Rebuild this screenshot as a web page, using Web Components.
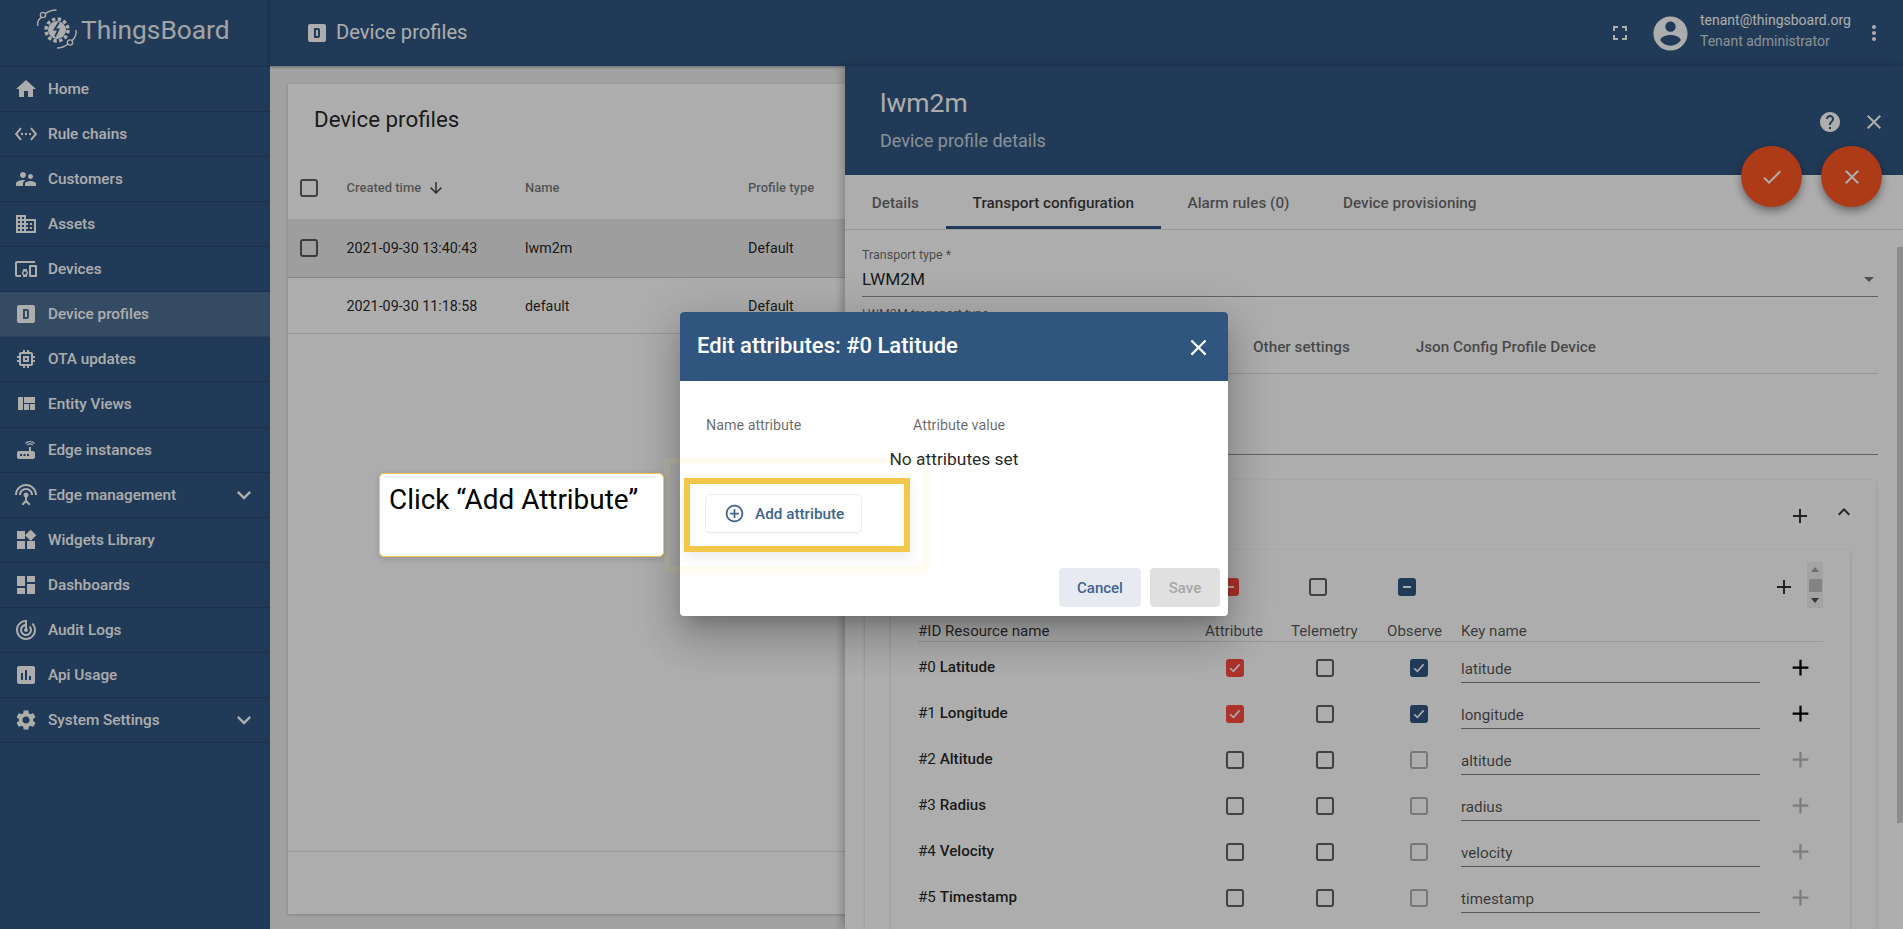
<!DOCTYPE html>
<html lang="en"><head><meta charset="utf-8"><title>Device profiles</title>
<style>
html,body{margin:0;height:100%;overflow:hidden;background:#eee;font-family:Roboto,"Liberation Sans",sans-serif}
</style></head><body>
<tb-app></tb-app>
<script>
const P={
home:'M10 20v-6h4v6h5v-8h3L12 3 2 12h3v8z',
rule:'M7.77 6.76L6.23 5.48.82 12l5.41 6.52 1.54-1.28L3.42 12l4.35-5.24zM7 13h2v-2H7v2zm10-2h-2v2h2v-2zm-6 2h2v-2h-2v2zm6.77-7.52l-1.54 1.28L20.58 12l-4.35 5.24 1.54 1.28L23.18 12l-5.41-6.52z',
people:'M16.5 12c1.38 0 2.49-1.12 2.49-2.5S17.88 7 16.5 7C15.12 7 14 8.12 14 9.5s1.12 2.5 2.5 2.5zM9 11c1.66 0 2.99-1.34 2.99-3S10.66 5 9 5C7.34 5 6 6.34 6 8s1.34 3 3 3zm7.5 3c-1.83 0-5.5.92-5.5 2.75V19h11v-2.25c0-1.83-3.67-2.75-5.5-2.75zM9 13c-2.33 0-7 1.17-7 3.5V19h7v-2.25c0-.85.33-2.34 2.37-3.47C10.5 13.1 9.66 13 9 13z',
domain:'M12 7V3H2v18h20V7H12zM6 19H4v-2h2v2zm0-4H4v-2h2v2zm0-4H4V9h2v2zm0-4H4V5h2v2zm4 12H8v-2h2v2zm0-4H8v-2h2v2zm0-4H8V9h2v2zm0-4H8V5h2v2zm10 12h-8v-2h2v-2h-2v-2h2v-2h-2V9h8v10zm-2-8h-2v2h2v-2zm0 4h-2v2h2v-2z',
devices:'M3 6h18V4H3c-1.1 0-2 .9-2 2v12c0 1.1.9 2 2 2h4v-2H3V6zm10 6H9v1.78c-.61.55-1 1.33-1 2.22s.39 1.67 1 2.22V20h4v-1.78c.61-.55 1-1.34 1-2.22s-.39-1.67-1-2.22V12zm-2 5.5c-.83 0-1.5-.67-1.5-1.5s.67-1.5 1.5-1.5 1.5.67 1.5 1.5-.67 1.5-1.5 1.5zM22 8h-6c-.5 0-1 .5-1 1v10c0 .5.5 1 1 1h6c.5 0 1-.5 1-1V9c0-.5-.5-1-1-1zm-1 10h-4v-8h4v8z',
dbox:'M9,7V17H13A2,2 0 0,0 15,15V9A2,2 0 0,0 13,7H9M5,3H19A2,2 0 0,1 21,5V19A2,2 0 0,1 19,21H5A2,2 0 0,1 3,19V5A2,2 0 0,1 5,3M11,9H13V15H11V9Z',
memory:'M15 9H9v6h6V9zm-2 4h-2v-2h2v2zm8-2V9h-2V7c0-1.1-.9-2-2-2h-2V3h-2v2h-2V3H9v2H7c-1.1 0-2 .9-2 2v2H3v2h2v2H3v2h2v2c0 1.1.9 2 2 2h2v2h2v-2h2v2h2v-2h2c1.1 0 2-.9 2-2v-2h2v-2h-2v-2h2zm-4 6H7V7h10v10z',
quilt:'M10 18h5v-6h-5v6zm-6 0h5V5H4v13zm12 0h5v-6h-5v6zM10 5v6h11V5H10z',
router:'M20.2 5.9l.8-.8C19.6 3.7 17.8 3 16 3s-3.6.7-5 2.1l.8.8C13 4.8 14.5 4.2 16 4.2s3 .6 4.2 1.7zm-.9.8c-.9-.9-2.1-1.4-3.3-1.4s-2.4.5-3.3 1.4l.8.8c.7-.7 1.6-1 2.5-1 .9 0 1.8.3 2.5 1l.8-.8zM19 13h-2V9h-2v4H5c-1.1 0-2 .9-2 2v4c0 1.1.9 2 2 2h14c1.1 0 2-.9 2-2v-4c0-1.1-.9-2-2-2zM8 18H6v-2h2v2zm3.5 0h-2v-2h2v2zm3.5 0h-2v-2h2v2z',
antenna:'M12 5c-3.87 0-7 3.13-7 7h2c0-2.76 2.24-5 5-5s5 2.24 5 5h2c0-3.87-3.13-7-7-7zm1 9.29c.88-.39 1.5-1.26 1.5-2.29 0-1.38-1.12-2.5-2.5-2.5S9.5 10.62 9.5 12c0 1.02.62 1.9 1.5 2.29v3.3L7.59 21 9 22.41l3-3 3 3L16.41 21 13 17.59v-3.3zM12 1C5.93 1 1 5.93 1 12h2c0-4.97 4.03-9 9-9s9 4.03 9 9h2c0-6.07-4.93-11-11-11z',
widgets:'M13 13v8h8v-8h-8zM3 21h8v-8H3v8zM3 3v8h8V3H3zm13.66-1.31L11 7.34 16.66 13l5.66-5.66-5.66-5.65z',
dash:'M3 13h8V3H3v10zm0 8h8v-6H3v6zm10 0h8V11h-8v10zm0-18v6h8V3h-8z',
track:'M19.07 4.93l-1.41 1.41C19.1 7.79 20 9.79 20 12c0 4.42-3.58 8-8 8s-8-3.58-8-8c0-4.08 3.05-7.44 7-7.93v2.02C8.16 6.57 6 9.03 6 12c0 3.31 2.69 6 6 6s6-2.69 6-6c0-1.66-.67-3.16-1.76-4.24l-1.41 1.41C15.55 9.9 16 10.9 16 12c0 2.21-1.79 4-4 4s-4-1.79-4-4c0-1.86 1.28-3.41 3-3.86v2.14c-.6.35-1 .98-1 1.72 0 1.1.9 2 2 2s2-.9 2-2c0-.74-.4-1.38-1-1.72V2h-1C6.48 2 2 6.48 2 12s4.48 10 10 10 10-4.48 10-10c0-2.76-1.12-5.26-2.93-7.07z',
chart:'M19 3H5c-1.1 0-2 .9-2 2v14c0 1.1.9 2 2 2h14c1.1 0 2-.9 2-2V5c0-1.1-.9-2-2-2zM9 17H7v-7h2v7zm4 0h-2V7h2v10zm4 0h-2v-4h2v4z',
settings:'M19.14 12.94c.04-.3.06-.61.06-.94 0-.32-.02-.64-.07-.94l2.03-1.58c.18-.14.23-.41.12-.61l-1.92-3.32c-.12-.22-.37-.29-.59-.22l-2.39.96c-.5-.38-1.03-.7-1.62-.94l-.36-2.54c-.04-.24-.24-.41-.48-.41h-3.84c-.24 0-.43.17-.47.41l-.36 2.54c-.59.24-1.13.57-1.62.94l-2.39-.96c-.22-.08-.47 0-.59.22L2.74 8.87c-.12.21-.08.47.12.61l2.03 1.58c-.05.3-.07.63-.07.94s.02.64.07.94l-2.03 1.58c-.18.14-.23.41-.12.61l1.92 3.32c.12.22.37.29.59.22l2.39-.96c.5.38 1.03.7 1.62.94l.36 2.54c.05.24.24.41.48.41h3.84c.24 0 .44-.17.47-.41l.36-2.54c.59-.24 1.13-.56 1.62-.94l2.39.96c.22.08.47 0 .59-.22l1.92-3.32c.12-.22.07-.47-.12-.61l-2.01-1.58zM12 15.6c-1.98 0-3.6-1.62-3.6-3.6s1.62-3.6 3.6-3.6 3.6 1.62 3.6 3.6-1.62 3.6-3.6 3.6z',
more:'M16.59 8.59L12 13.17 7.41 8.59 6 10l6 6 6-6z',
less:'M12 8l-6 6 1.41 1.41L12 10.83l4.59 4.58L18 14z',
account:'M12 2C6.48 2 2 6.48 2 12s4.48 10 10 10 10-4.48 10-10S17.52 2 12 2zm0 3c1.66 0 3 1.34 3 3s-1.34 3-3 3-3-1.34-3-3 1.34-3 3-3zm0 14.2c-2.5 0-4.71-1.28-6-3.22.03-1.99 4-3.08 6-3.08 1.99 0 5.97 1.09 6 3.08-1.29 1.94-3.5 3.22-6 3.22z',
full:'M7 14H5v5h5v-2H7v-3zm-2-4h2V7h3V5H5v5zm12 7h-3v2h5v-5h-2v3zM14 5v2h3v3h2V5h-5z',
vert:'M12 8c1.1 0 2-.9 2-2s-.9-2-2-2-2 .9-2 2 .9 2 2 2zm0 2c-1.1 0-2 .9-2 2s.9 2 2 2 2-.9 2-2-.9-2-2-2zm0 6c-1.1 0-2 .9-2 2s.9 2 2 2 2-.9 2-2-.9-2-2-2z',
help:'M12 2C6.48 2 2 6.48 2 12s4.48 10 10 10 10-4.48 10-10S17.52 2 12 2zm1 17h-2v-2h2v2zm2.07-7.75l-.9.92C13.45 12.9 13 13.5 13 15h-2v-.5c0-1.1.45-2.1 1.17-2.83l1.24-1.26c.37-.36.59-.86.59-1.41 0-1.1-.9-2-2-2s-2 .9-2 2H8c0-2.21 1.79-4 4-4s4 1.79 4 4c0 .88-.36 1.68-.93 2.25z',
close:'M19 6.41L17.59 5 12 10.59 6.41 5 5 6.41 10.59 12 5 17.59 6.41 19 12 13.41 17.59 19 19 17.59 13.41 12z',
check:'M9 16.17L4.83 12l-1.42 1.41L9 19 21 7l-1.41-1.41z',
add:'M19 13h-6v6h-2v-6H5v-2h6V5h2v6h6v2z',
down:'M20 12l-1.41-1.41L13 16.17V4h-2v12.17l-5.58-5.59L4 12l8 8 8-8z',
addc:'M13 7h-2v4H7v2h4v4h2v-4h4v-2h-4V7zm-1-5C6.48 2 2 6.48 2 12s4.48 10 10 10 10-4.48 10-10S17.52 2 12 2zm0 18c-4.41 0-8-3.59-8-8s3.59-8 8-8 8 3.59 8 8-3.59 8-8 8z',
caret:'M7 10l5 5 5-5z'
};
function def(tag,css,html){
  class C extends HTMLElement{
    constructor(){super();const r=this.attachShadow({mode:'open'});
      r.innerHTML='<style>'+css+'</style>'+(typeof html==='function'?html(this):html);}
  }
  customElements.define(tag,C);
}
class TbIcon extends HTMLElement{
  connectedCallback(){
    if(this.shadowRoot)return;
    const s=this.getAttribute('size')||24;
    this.attachShadow({mode:'open'}).innerHTML=`<style>:host{display:inline-flex;flex:none;width:${s}px;height:${s}px;color:inherit}svg{width:100%;height:100%;fill:currentColor;display:block}</style><svg viewBox="0 0 24 24"><path d="${P[this.getAttribute('name')]}"/></svg>`;
  }
}
customElements.define('tb-icon',TbIcon);

class TbCheck extends HTMLElement{
  connectedCallback(){
    if(this.shadowRoot)return;
    const k=this.getAttribute('kind')||'off';
    const c={off:'rgba(0,0,0,.62)',faint:'rgba(0,0,0,.3)',red:'#ff4b40',blue:'#305680'}[k];
    const fill=k==='red'||k==='blue';
    const mark=this.getAttribute('mark');
    const m=mark==='minus'?'<path d="M5 9h8" stroke="#fff" stroke-width="2"/>':mark==='check'?'<path d="M4.2 9.2l3.2 3.2 6.2-7" fill="none" stroke="#fff" stroke-width="1.6"/>':'';
    this.attachShadow({mode:'open'}).innerHTML=`<style>:host{display:inline-flex;flex:none;width:18px;height:18px}svg{display:block}</style><svg width="18" height="18" viewBox="0 0 18 18"><rect x="1" y="1" width="16" height="16" rx="2" fill="${fill?c:'none'}" stroke="${c}" stroke-width="2"/>${m}</svg>`;
  }
}
customElements.define('tb-check',TbCheck);

def('tb-nav-item',`
:host{display:flex;align-items:center;height:44.07px;border-bottom:1px solid rgba(0,0,0,.12);color:#fff;font:500 15.3px/20px Roboto,sans-serif;position:relative}
:host([active]){background:rgba(255,255,255,.15)}
.ic{width:48px;display:flex;justify-content:center;padding-left:3px;box-sizing:border-box}
.t{flex:1;white-space:nowrap}
.x{margin-right:12px;display:flex}
`,el=>`<div class="ic"><tb-icon name="${el.getAttribute('icon')}"></tb-icon></div><div class="t"><slot></slot></div>${el.hasAttribute('expand')?'<div class="x"><tb-icon name="more" size="28"></tb-icon></div>':''}`);

def('tb-logo',`
:host{display:flex;align-items:center;height:67px;padding-left:36px;color:#fff;box-sizing:border-box;border-bottom:1px solid rgba(0,0,0,.14)}
svg{display:block;margin-right:3px;margin-top:-6px}
span{font:400 26.3px/32px Roboto,sans-serif;margin-top:-6px;opacity:.92}
`,`<svg width="42" height="44" viewBox="36 10 42 44"><g fill="none" stroke="currentColor" stroke-width="1.4"><circle cx="43" cy="17" r="2.6"/><path d="M38 28C37 24 39 21 41.4 19.4M45.5 15.5C48 13.6 52 12 56.5 12"/><circle cx="70" cy="44.5" r="2.6"/><path d="M76 32C76.5 36 75 40 72 42.5M67.8 46C65 48.5 61 50 57 50"/></g><circle cx="57" cy="32" r="9" fill="currentColor"/><circle cx="57" cy="32" r="11" fill="none" stroke="currentColor" stroke-width="3.4" stroke-dasharray="3.4 2.4"/><path d="M59 24.5l-4.5 7h4l-3.5 7" fill="none" stroke="#305680" stroke-width="1.8"/></svg><span>ThingsBoard</span>`);

def('tb-sidebar',`
:host{display:block;background:#305680;box-shadow:1px 0 0 rgba(0,0,0,.18);position:relative;overflow:hidden}
`,`<tb-logo></tb-logo>
<tb-nav-item icon="home">Home</tb-nav-item>
<tb-nav-item icon="rule">Rule chains</tb-nav-item>
<tb-nav-item icon="people">Customers</tb-nav-item>
<tb-nav-item icon="domain">Assets</tb-nav-item>
<tb-nav-item icon="devices">Devices</tb-nav-item>
<tb-nav-item icon="dbox" active>Device profiles</tb-nav-item>
<tb-nav-item icon="memory">OTA updates</tb-nav-item>
<tb-nav-item icon="quilt">Entity Views</tb-nav-item>
<tb-nav-item icon="router">Edge instances</tb-nav-item>
<tb-nav-item icon="antenna" expand>Edge management</tb-nav-item>
<tb-nav-item icon="widgets">Widgets Library</tb-nav-item>
<tb-nav-item icon="dash">Dashboards</tb-nav-item>
<tb-nav-item icon="track">Audit Logs</tb-nav-item>
<tb-nav-item icon="chart">Api Usage</tb-nav-item>
<tb-nav-item icon="settings" expand>System Settings</tb-nav-item>`);

def('tb-topbar',`
:host{display:flex;align-items:center;height:66px;background:#305680;color:#fff;padding:0 17px 0 35px;box-sizing:border-box;box-shadow:0 1px 3px rgba(0,0,0,.4);position:relative;flex:none}
.title{font:400 20.2px/28px Roboto,sans-serif;margin-left:7px;margin-top:-2px}
.r{margin-left:auto;display:flex;align-items:center}
.u{width:151px;margin:0 11px 0 9px}
.a{font:400 14px/20px Roboto,sans-serif;white-space:nowrap;margin-top:-6px}
.b{font:400 14px/20px Roboto,sans-serif;opacity:.75;white-space:nowrap;margin-top:1px}
`,`<tb-icon name="dbox"></tb-icon><div class="title">Device profiles</div>
<div class="r"><tb-icon name="full"></tb-icon><span style="width:18px"></span><tb-icon name="account" size="41"></tb-icon>
<div class="u"><div class="a">tenant@thingsboard.org</div><div class="b">Tenant administrator</div></div><tb-icon name="vert"></tb-icon></div>`);

def('tb-table-row',`
:host{display:grid;grid-template-columns:58.5px 178.5px 223px 1fr;align-items:center;height:55px;border-bottom:1px solid rgba(0,0,0,.12);color:rgba(0,0,0,.87);font:400 14.3px/20px Roboto,sans-serif}
:host([sel]){background:#e9e9e9;height:58px}
:host([head]){height:63px;color:rgba(0,0,0,.54);font:500 13px/16px Roboto,sans-serif;border-bottom:0}
.c{padding-left:12px;display:flex}
.m{display:flex;align-items:center;gap:6px}
`,el=>`<div class="c">${el.hasAttribute('box')?'<tb-check></tb-check>':''}</div><div class="m">${el.getAttribute('a')}${el.hasAttribute('head')?'<tb-icon name="down" size="18" style="color:rgba(0,0,0,.75)"></tb-icon>':''}</div><div>${el.getAttribute('b')}</div><div>${el.getAttribute('c')}</div>`);

def('tb-card',`
:host{display:flex;flex-direction:column;background:#fff;height:100%;box-shadow:0 1px 3px rgba(0,0,0,.2)}
h2{margin:0;font:400 22.3px/30px Roboto,sans-serif;color:rgba(0,0,0,.87);padding:20px 0 22px 26px}
.sp{flex:1}
.f{height:62px;border-top:1px solid rgba(0,0,0,.12);flex:none}
`,`<h2>Device profiles</h2>
<tb-table-row head box a="Created time" b="Name" c="Profile type"></tb-table-row>
<tb-table-row sel box a="2021-09-30 13:40:43" b="lwm2m" c="Default"></tb-table-row>
<tb-table-row a="2021-09-30 11:18:58" b="default" c="Default"></tb-table-row>
<div class="sp"></div><div class="f"></div>`);

def('tb-tab',`
:host{display:flex;align-items:center;justify-content:center;padding:1px 26.8px 0;height:54px;box-sizing:border-box;color:rgba(0,0,0,.6);font:500 15.3px/20px Roboto,sans-serif;white-space:nowrap}
:host([active]){border-bottom:3px solid #305680;padding-top:4px;color:rgba(0,0,0,.78)}
`,`<slot></slot>`);

def('tb-attr-row',`
:host{display:grid;grid-template-columns:278px 78px 102px 85px 299px 63px;align-items:center;height:46px;font:400 15.2px/20px Roboto,sans-serif;color:rgba(0,0,0,.87)}
.n{padding-bottom:3px;white-space:nowrap}.n b{font-weight:500}
.c{display:flex;justify-content:center}
.k{height:28px;box-sizing:border-box;display:flex;align-items:center;border-bottom:1px solid rgba(0,0,0,.5);color:rgba(0,0,0,.7);margin-top:2px}
.p{padding:0 0 2px 27px;display:flex}
`,el=>{const on=el.hasAttribute('on');return `<div class="n">${el.getAttribute('id-label')} <b>${el.getAttribute('label')}</b></div>
<div class="c"><tb-check kind="${on?'red':'off'}" ${on?'mark="check"':''}></tb-check></div>
<div class="c"><tb-check></tb-check></div>
<div class="c"><tb-check kind="${on?'blue':'faint'}" ${on?'mark="check"':''}></tb-check></div>
<div class="k">${el.getAttribute('key')}</div>
<div class="p"><tb-icon name="add" size="27" style="color:${on?'#000':'rgba(0,0,0,.28)'}"></tb-icon></div>`});

def('tb-drawer',`
:host{display:flex;flex-direction:column;background:#fff;box-shadow:-3px 0 8px rgba(0,0,0,.25);overflow:hidden}
.hd{height:109px;background:#305680;color:#fff;display:flex;justify-content:space-between;padding:0 17px 41px 35px;box-sizing:border-box;flex:none;position:relative;align-items:flex-end}
.tt{align-self:flex-start;padding-top:21px}
.t1{font:400 26.5px/32px Roboto,sans-serif}
.t2{font:400 18px/22px Roboto,sans-serif;margin-top:11px;opacity:.75}
.ac{display:flex;gap:20px}
.tabs{display:flex;height:54px;border-bottom:1px solid rgba(0,0,0,.12);flex:none;padding-left:0}
.body{flex:1;padding:18px 25px 0 17px;position:relative;overflow:hidden}
.lb{font:400 12.5px/14px Roboto,sans-serif;color:rgba(0,0,0,.6)}
.sel{display:flex;justify-content:space-between;align-items:center;font:400 17.2px/22px Roboto,sans-serif;color:rgba(0,0,0,.87);margin-top:6px;padding-bottom:6px;border-bottom:1px solid rgba(0,0,0,.42)}
.sel tb-icon{color:rgba(0,0,0,.54);margin:-1px -3px -1px 0}
.hint{margin-top:10px}
.t2row{display:flex;gap:66px;height:53px;margin-top:-1px;border-bottom:1px solid rgba(0,0,0,.12);align-items:center;padding-left:391px;color:rgba(0,0,0,.6);font:500 15.3px/20px Roboto,sans-serif}
.fld{height:80px;border-bottom:1px solid rgba(0,0,0,.42)}
.panel{margin:25px 2px 0 3px;background:#fff;box-shadow:0 1px 3px rgba(0,0,0,.2);border-radius:4px;height:600px}
.phd{height:70px;display:flex;justify-content:flex-end;padding:0 20px 0 0;box-sizing:border-box;gap:20px;color:rgba(0,0,0,.8);align-items:flex-start}
.phd tb-icon:first-child{margin-top:24px}.phd tb-icon:last-child{margin-top:20px}
.in{margin:0 26px;background:#fff;box-shadow:0 1px 3px rgba(0,0,0,.2);border-radius:4px;padding:14px 27px 0;height:500px}
.sr{display:flex;align-items:center;height:46px;position:relative}
.sr tb-check:nth-child(1){margin-left:303px}
.sr tb-check:nth-child(2){margin-left:70px}
.sr tb-check:nth-child(3){margin-left:71px}
.sr tb-icon{margin-left:auto;margin-right:27px;color:rgba(0,0,0,.8)}
.sb{position:absolute;right:0;top:-2px;width:16px;height:46px;background:#f1f1f1;display:flex;flex-direction:column;align-items:center;justify-content:space-between;padding:5px 0;box-sizing:border-box}
.sb i{display:block;width:0;height:0;border:4px solid transparent}
.sb .u{border-top:0;border-bottom:5px solid #a3a3a3}
.sb .d{border-bottom:0;border-top:5px solid #505050}
.sb .tm{width:13px;height:13px;background:#c1c1c1}
.th{font:400 15.1px/20px Roboto,sans-serif;color:rgba(0,0,0,.68);display:grid;grid-template-columns:287px 70px 95px 81px 1fr;height:32px;align-items:end;border-bottom:1px solid rgba(0,0,0,.12);margin-bottom:3px;white-space:nowrap;box-sizing:border-box}
.th span:nth-child(1){color:rgba(0,0,0,.8)}
.th span:nth-child(3){margin-left:16px}
.th span:nth-child(4){margin-left:17px}
.th span:nth-child(5){margin-left:10px}
.fab{position:absolute;top:80px;width:61px;height:61px;border-radius:50%;background:#ff5722;color:#fff;display:flex;align-items:center;justify-content:center;box-shadow:0 4px 8px rgba(0,0,0,.4)}
.scr{position:absolute;right:0;top:17px;width:6px;height:576px;background:#d0d0d0}
`,`<div class="hd"><div class="tt"><div class="t1">lwm2m</div><div class="t2">Device profile details</div></div>
<div class="ac"><tb-icon name="help"></tb-icon><tb-icon name="close"></tb-icon></div></div>
<div class="tabs"><tb-tab>Details</tb-tab><tb-tab active>Transport configuration</tb-tab><tb-tab>Alarm rules (0)</tb-tab><tb-tab>Device provisioning</tb-tab></div>
<div class="body">
<div class="lb">Transport type *</div>
<div class="sel"><span>LWM2M</span><tb-icon name="caret"></tb-icon></div>
<div class="lb hint">LWM2M transport type</div>
<div class="t2row"><span>Other settings</span><span>Json Config Profile Device</span></div>
<div class="fld"></div>
<div class="panel"><div class="phd"><tb-icon name="add"></tb-icon><tb-icon name="less"></tb-icon></div>
<div class="in">
<div class="sr"><tb-check kind="red" mark="minus"></tb-check><tb-check></tb-check><tb-check kind="blue" mark="minus"></tb-check><tb-icon name="add"></tb-icon>
<div class="sb"><i class="u"></i><div class="tm"></div><i class="d"></i></div></div>
<div class="th"><span>#ID Resource name</span><span>Attribute</span><span>Telemetry</span><span>Observe</span><span>Key name</span></div>
<tb-attr-row on id-label="#0" label="Latitude" key="latitude"></tb-attr-row>
<tb-attr-row on id-label="#1" label="Longitude" key="longitude"></tb-attr-row>
<tb-attr-row id-label="#2" label="Altitude" key="altitude"></tb-attr-row>
<tb-attr-row id-label="#3" label="Radius" key="radius"></tb-attr-row>
<tb-attr-row id-label="#4" label="Velocity" key="velocity"></tb-attr-row>
<tb-attr-row id-label="#5" label="Timestamp" key="timestamp"></tb-attr-row>
</div></div>
<div class="scr"></div>
</div>
<div class="fab" style="left:896px"><tb-icon name="check"></tb-icon></div>
<div class="fab" style="left:976px"><tb-icon name="close"></tb-icon></div>`);

def('tb-dialog',`
:host{display:flex;flex-direction:column;width:548px;height:304px;background:#fff;border-radius:4px;overflow:hidden;box-shadow:0 11px 15px -7px rgba(0,0,0,.2),0 24px 38px 3px rgba(0,0,0,.14),0 9px 46px 8px rgba(0,0,0,.12);box-sizing:border-box}
.h{height:69px;flex:none;background:#305680;color:#fff;display:flex;align-items:center;justify-content:space-between;padding:0 16px 0 17px}
.h b{font:500 22px/28px Roboto,sans-serif;margin-top:-2px}
.h tb-icon{margin-top:2px}
.c{padding:36px 26px 0;flex:1}
.cols{display:flex;font:400 14.3px/16px Roboto,sans-serif;color:rgba(0,0,0,.6)}
.cols span:first-child{width:207px}
.e{text-align:center;margin:16px -26px 0;font:400 17.4px/20px Roboto,sans-serif;color:rgba(0,0,0,.87)}
.add{display:inline-flex;align-items:center;gap:10px;box-sizing:border-box;width:157px;height:39px;margin-top:25px;margin-left:-1px;padding-left:18px;border:1px solid #ececec;border-radius:5px;color:#3f6490;font:500 15.3px/20px Roboto,sans-serif;box-shadow:0 1px 1px rgba(0,0,0,.03)}
.f{display:flex;justify-content:flex-end;gap:9px;padding:0 8px 9px}
.f div{height:39px;border-radius:4px;display:flex;align-items:center;justify-content:center;font:500 15px/20px Roboto,sans-serif}
.ca{width:82px;background:#e7ebf1;color:#3f6490}
.sa{width:70px;background:#e0e0e0;color:#a6a6a6}
`,`<div class="h"><b>Edit attributes: #0 Latitude</b><tb-icon name="close" size="27"></tb-icon></div>
<div class="c"><div class="cols"><span>Name attribute</span><span>Attribute value</span></div>
<div class="e">No attributes set</div>
<div class="add"><tb-icon name="addc" size="21"></tb-icon><span>Add attribute</span></div></div>
<div class="f"><div class="ca">Cancel</div><div class="sa">Save</div></div>`);

def('tb-callout',`
:host{display:block;position:absolute;left:379px;top:473px;width:285px;height:84px;box-sizing:border-box;background:#fff;border:1.5px solid #f3c74b;border-radius:5px;padding:8px 9px;color:#000;font:400 27.9px/36px Roboto,sans-serif;white-space:nowrap;box-shadow:0 2px 6px rgba(0,0,0,.15)}
`,`<slot></slot>`);

def('tb-spot',`
:host{display:block;position:absolute;box-sizing:border-box;pointer-events:none}
`,``);

def('tb-app',`
:host{display:block;position:relative;width:100vw;height:100vh;overflow:hidden}
.g{display:grid;grid-template-columns:270px 1fr;height:100%}
.m{display:flex;flex-direction:column;min-width:0;background:#eee;position:relative}
.ct{flex:1;padding:18px 18px 15px;min-height:0}
tb-drawer{position:absolute;left:575px;right:0;top:66px;bottom:0}
.bd{position:absolute;inset:0;background:rgba(0,0,0,.32)}
tb-dialog{position:absolute;left:680px;top:312px}
`,`<div class="g"><tb-sidebar></tb-sidebar><div class="m"><tb-topbar></tb-topbar><div class="ct"><tb-card></tb-card></div><tb-drawer></tb-drawer></div></div>
<div class="bd"></div>
<tb-dialog></tb-dialog>
<tb-spot style="left:641px;top:437px;width:310px;height:156px;border:1px solid rgba(243,199,75,.06)"></tb-spot>
<tb-spot style="left:664px;top:458px;width:265px;height:114px;border:6px solid rgba(243,199,75,.08)"></tb-spot>
<tb-spot style="left:684px;top:478px;width:226px;height:74px;border:6px solid #f3c74b;box-shadow:0 6px 12px rgba(0,0,0,.08)"></tb-spot>
<tb-callout>Click “Add Attribute”</tb-callout>`);
</script>
</body></html>
